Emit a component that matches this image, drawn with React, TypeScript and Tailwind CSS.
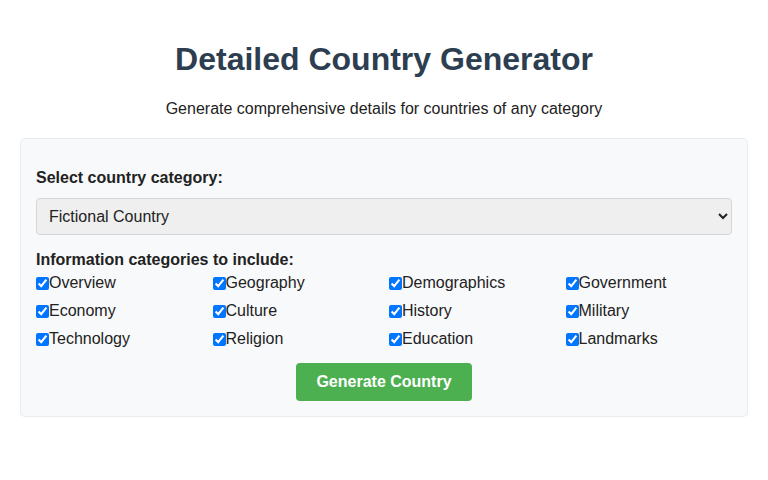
import React from "react";

const items = [
  "Overview", "Geography", "Demographics", "Government",
  "Economy", "Culture", "History", "Military",
  "Technology", "Religion", "Education", "Landmarks",
];

export default function App() {
  return (
    <div className="min-h-screen bg-white text-[#222] px-[20px] pt-[20px]" style={{ fontFamily: '"Liberation Sans", Arial, sans-serif' }}>
      <div className="max-w-[800px] mx-auto">
        <h1 className="text-[32px] font-bold text-center text-[#2c3e50] mt-[21px] leading-[37px]">Detailed Country Generator</h1>
        <p className="text-[16px] leading-[18px] text-center mt-[22px]">Generate comprehensive details for countries of any category</p>
        <div className="mt-[20px] bg-[#f8f9fa] border border-[#e9ecef] rounded-[5px] px-[15px] pt-[30px] pb-[15px]">
          <label className="block font-bold text-[16px] leading-[18px] mb-[11px]">Select country category:</label>
          <select defaultValue="fictional" className="block w-full h-[37px] bg-[#efefef] border border-[#d6d6d6] rounded-[4px] pl-[8px] pr-[4px] text-[16px] text-[#222]">
            <option value="fictional">Fictional Country</option>
          </select>
          <label className="block font-bold text-[16px] leading-[18px] mt-[16px]">Information categories to include:</label>
          <div className="grid grid-cols-4 gap-[10px] mt-[5px]">
            {items.map((it) => (
              <label key={it} className="flex items-center text-[16px] leading-[18px]">
                <input type="checkbox" defaultChecked className="m-0 w-[13px] h-[13px]" />
                <span>{it}</span>
              </label>
            ))}
          </div>
          <div className="flex justify-center mt-[15px]">
            <button className="bg-[#4caf50] text-white font-bold text-[16px] leading-[18px] px-[20px] py-[10px] rounded-[4px]">Generate Country</button>
          </div>
        </div>
      </div>
    </div>
  );
}
